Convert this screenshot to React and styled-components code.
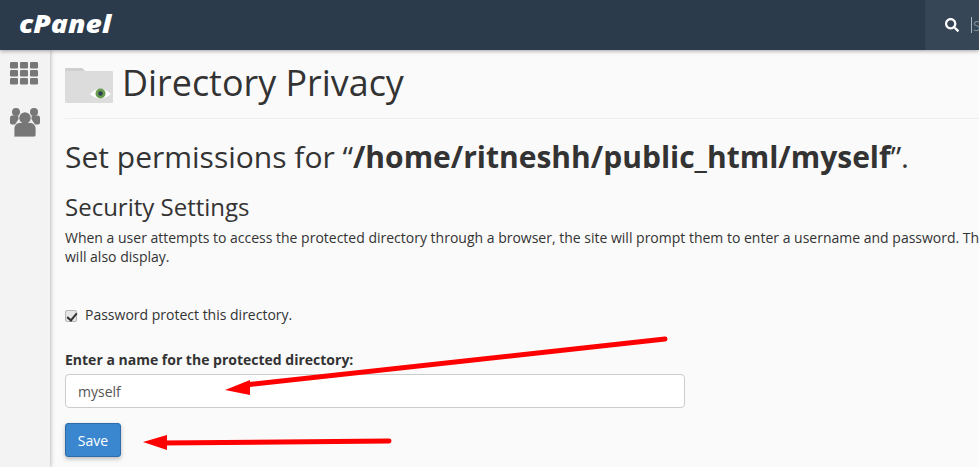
import React from "react";
import styled, { createGlobalStyle } from "styled-components";
import { FaSearch } from "react-icons/fa";

const Global = createGlobalStyle`
  html, body { margin: 0; padding: 0; width: 979px; height: 467px; overflow: hidden; background: #fafafa; }
  * { box-sizing: border-box; }
`;
const Page = styled.div`
  position: relative; width: 979px; height: 467px; overflow: hidden;
  font-family: "Open Sans", sans-serif; color: #333; background: #fafafa;
`;
const TopBar = styled.header`
  position: relative; z-index: 2; height: 50px; background: #2b3b4c; display: flex;
  justify-content: space-between; align-items: stretch;
  box-shadow: 0 1px 4px rgba(0,0,0,.35);
`;
const Logo = styled.div`
  font-family: "Open Sans", sans-serif; font-weight: 800; font-style: italic; font-size: 25px;
  color: #fff; margin: 5px 0 0 19px; line-height: 36px; transform: scaleX(1.13); transform-origin: left center;
`;
const SearchBox = styled.div`
  width: 54px; background: #364656; border-left: 1px solid #324252; display: flex; align-items: center;
  padding-left: 19px; gap: 12px; color: #fff; overflow: hidden; font-size: 14px;
`;
const Caret = styled.span`
  flex: none; height: 16px; width: 1px; background: #aeb6be;
`;
const Hint = styled.span`color: #7d8994; margin-left: -11px;`;
const Body = styled.div`display: flex; height: 417px;`;
const Side = styled.nav`
  flex: none; width: 50px; background: #f3f3f3; box-shadow: 1px 0 4px rgba(0,0,0,.25); display: flex; flex-direction: column;
  align-items: center; padding-top: 12px; gap: 22px; position: relative; z-index: 1;
`;
const Main = styled.main`flex: 1; min-width: 0; padding: 0 0 0 15px; overflow: hidden;`;
const TitleRow = styled.div`
  display: flex; align-items: flex-start; gap: 10px; height: 69px; border-bottom: 1px solid #eee; padding-top: 17px;
`;
const Title = styled.h1`margin: -6px 0 0 -1px; font-weight: 400; font-size: 35.9px; line-height: 44px; color: #333;`;
const Perm = styled.h2`margin: 19px 0 0; font-weight: 400; font-size: 30px; line-height: 38px; white-space: nowrap; color: #333; b { font-weight: 700; }`;
const Sec = styled.h3`margin: 16px 0 0; font-weight: 400; font-size: 24px; line-height: 30px; color: #333;`;
const Text = styled.p`margin: 6px 0 0; font-size: 14px; line-height: 19px; white-space: nowrap; color: #333;`;
const CheckRow = styled.label`display: flex; align-items: center; margin-top: 39px; font-size: 14px; line-height: 20px; color: #333;`;
const Check = styled.input`
  appearance: none; position: relative; margin: 1px 8px 0 0; width: 12px; height: 12px; flex: none;
  background: #e6e6e6; border: 1px solid #b5b5b5; border-radius: 2px;
  &:checked::after {
    content: ""; position: absolute; left: 3px; top: 0px; width: 4px; height: 8px;
    border: solid #333; border-width: 0 2px 2px 0; transform: rotate(40deg);
  }
`;
const Field = styled.label`display: block; margin-top: 25px; font-size: 14px; line-height: 20px; font-weight: 700; color: #333;`;
const Input = styled.input`
  display: block; width: 620px; height: 34px; margin-top: 4px; padding: 6px 12px; border: 1px solid #ccc; border-radius: 4px;
  font: 400 14px "Open Sans", sans-serif; color: #555; background: #fff; outline: none;
`;
const Save = styled.button`
  display: block; margin-top: 15px; width: 56px; height: 34px; background: #3a87cf; border: 1px solid #2d6ca8; border-radius: 3px;
  color: #fff; font: 400 14px "Open Sans", sans-serif; box-shadow: 0 2px 4px rgba(0,0,0,.25); padding: 0;
`;
const Arrows = styled.svg`position: absolute; left: 0; top: 0; pointer-events: none; z-index: 3;`;

const GridIcon = () => (
  <svg width="30" height="23" viewBox="0 0 30 23" fill="#777">
    {[0, 8, 16].map((y) => [0, 10, 20].map((x) => (
      <rect key={x + "-" + y} x={x} y={y} width="8" height="6.500" rx="1.300" />
    )))}
  </svg>
);
const UsersIcon = () => (
  <svg width="30" height="30" viewBox="0 0 30 30" fill="#777">
    <circle cx="6" cy="5" r="4" />
    <circle cx="24" cy="5" r="4" />
    <path d="M0 10.500c0-1 1-2 2-2h6l1 3-4 6H2a2 2 0 0 1-2-2z" />
    <path d="M30 10.500c0-1-1-2-2-2h-6l-1 3 4 6h3a2 2 0 0 0 2-2z" />
    <circle cx="15" cy="11" r="6" stroke="#f3f3f3" strokeWidth="1" />
    <path d="M4 30v-8c0-4 3-6.500 6-6.500h10c3 0 6 2.500 6 6.500v6a2 2 0 0 1-2 2z" stroke="#f3f3f3" strokeWidth="0.800" />
    <circle cx="15" cy="11" r="5.600" />
  </svg>
);

export default function App() {
  return (
    <Page>
      <Global />
      <TopBar>
        <Logo>cPanel</Logo>
        <SearchBox><FaSearch size={14} style={{flex:"none"}} /><Caret /><Hint>Se</Hint></SearchBox>
      </TopBar>
      <Body>
        <Side>
          <GridIcon />
          <UsersIcon />
        </Side>
        <Main>
          <TitleRow>
            <svg width="48" height="36" viewBox="0 0 48 36">
              <path d="M0 2a1 1 0 0 1 1-1h16l3 3h27a1 1 0 0 1 1 1v30a1 1 0 0 1-1 1H1a1 1 0 0 1-1-1z" fill="#dcdcdc" />
              <path d="M0 5V2a1 1 0 0 1 1-1h16l3 3H1z" fill="#cfcfcf" />
              <path d="M25 27q10-10 21 0q-11 9-21 0z" fill="#fff" />
              <circle cx="35.500" cy="26.500" r="5" fill="#6a9c4f" />
              <circle cx="35.500" cy="26.500" r="2.200" fill="#2c3e50" />
            </svg>
            <Title>Directory Privacy</Title>
          </TitleRow>
          <Perm>Set permissions for “<b>/home/ritneshh/public_html/myself</b>”.</Perm>
          <Sec>Security Settings</Sec>
          <Text>When a user attempts to access the protected directory through a browser, the site will prompt them to enter a username and password. The<br />will also display.</Text>
          <CheckRow><Check type="checkbox" defaultChecked />Password protect this directory.</CheckRow>
          <Field htmlFor="name">Enter a name for the protected directory:</Field>
          <Input id="name" defaultValue="myself" />
          <Save>Save</Save>
        </Main>
      </Body>
      <Arrows width="979" height="467" viewBox="0 0 979 467">
        <path d="M665 339 L245 385" stroke="#f00" strokeWidth="5" strokeLinecap="round" fill="none" />
        <path d="M225 390 L250 380 L250 395z" fill="#f00" />
        <path d="M389 441 L160 443" stroke="#f00" strokeWidth="5" strokeLinecap="round" fill="none" />
        <path d="M143 442 L167 435 L167 450z" fill="#f00" />
      </Arrows>
    </Page>
  );
}
